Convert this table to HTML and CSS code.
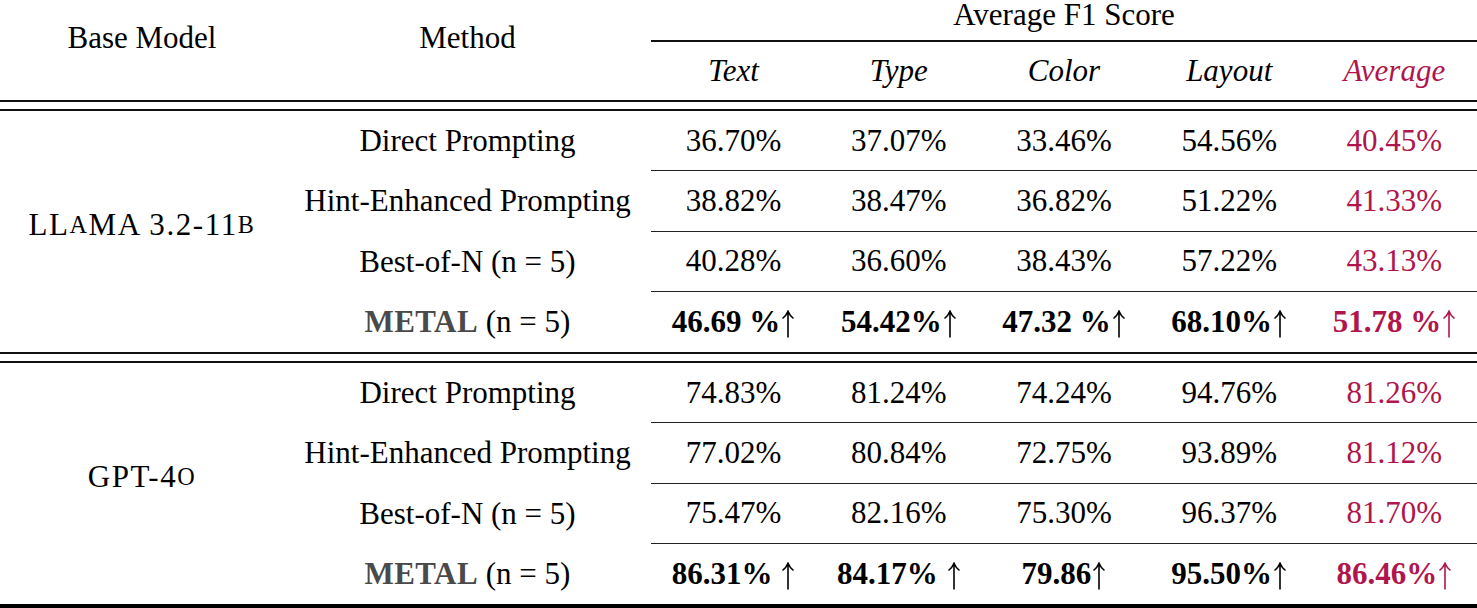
FILE: index.html
```html
<!DOCTYPE html>
<html>
<head>
<meta charset="utf-8">
<link rel="stylesheet" href="styles.css">
</head>
<body>
<div class="tbl">
  <div class="head">
    <div class="h-base">Base Model</div>
    <div class="h-method">Method</div>
    <div class="h-group">Average F1 Score</div>
    <div class="h-sub">Text</div>
    <div class="h-sub">Type</div>
    <div class="h-sub">Color</div>
    <div class="h-sub">Layout</div>
    <div class="h-sub hl">Average</div>
  </div>

  <div class="block">
    <div class="model">LL<span class="sc">a</span>MA 3.2-11<span class="sc">b</span></div>

    <div class="method">Direct Prompting</div>
    <div class="num rule">36.70%</div>
    <div class="num rule">37.07%</div>
    <div class="num rule">33.46%</div>
    <div class="num rule">54.56%</div>
    <div class="num rule hl">40.45%</div>

    <div class="method">Hint-Enhanced Prompting</div>
    <div class="num rule">38.82%</div>
    <div class="num rule">38.47%</div>
    <div class="num rule">36.82%</div>
    <div class="num rule">51.22%</div>
    <div class="num rule hl">41.33%</div>

    <div class="method">Best-of-N (n = 5)</div>
    <div class="num rule">40.28%</div>
    <div class="num rule">36.60%</div>
    <div class="num rule">38.43%</div>
    <div class="num rule">57.22%</div>
    <div class="num rule hl">43.13%</div>

    <div class="method"><b class="metal">METAL</b>&nbsp;(n = 5)</div>
    <div class="num best">46.69 %<svg class="up" viewBox="0 0 14 28"><path d="M7 27.5V1.5M1.5 8.5C4 6.5 5.8 4.2 7 1.2C8.2 4.2 10 6.5 12.5 8.5"/></svg></div>
    <div class="num best">54.42%<svg class="up" viewBox="0 0 14 28"><path d="M7 27.5V1.5M1.5 8.5C4 6.5 5.8 4.2 7 1.2C8.2 4.2 10 6.5 12.5 8.5"/></svg></div>
    <div class="num best">47.32 %<svg class="up" viewBox="0 0 14 28"><path d="M7 27.5V1.5M1.5 8.5C4 6.5 5.8 4.2 7 1.2C8.2 4.2 10 6.5 12.5 8.5"/></svg></div>
    <div class="num best">68.10%<svg class="up" viewBox="0 0 14 28"><path d="M7 27.5V1.5M1.5 8.5C4 6.5 5.8 4.2 7 1.2C8.2 4.2 10 6.5 12.5 8.5"/></svg></div>
    <div class="num best hl">51.78 %<svg class="up" viewBox="0 0 14 28"><path d="M7 27.5V1.5M1.5 8.5C4 6.5 5.8 4.2 7 1.2C8.2 4.2 10 6.5 12.5 8.5"/></svg></div>
  </div>

  <div class="block last">
    <div class="model">GPT-4<span class="sc">o</span></div>

    <div class="method">Direct Prompting</div>
    <div class="num rule">74.83%</div>
    <div class="num rule">81.24%</div>
    <div class="num rule">74.24%</div>
    <div class="num rule">94.76%</div>
    <div class="num rule hl">81.26%</div>

    <div class="method">Hint-Enhanced Prompting</div>
    <div class="num rule">77.02%</div>
    <div class="num rule">80.84%</div>
    <div class="num rule">72.75%</div>
    <div class="num rule">93.89%</div>
    <div class="num rule hl">81.12%</div>

    <div class="method">Best-of-N (n = 5)</div>
    <div class="num rule">75.47%</div>
    <div class="num rule">82.16%</div>
    <div class="num rule">75.30%</div>
    <div class="num rule">96.37%</div>
    <div class="num rule hl">81.70%</div>

    <div class="method"><b class="metal">METAL</b>&nbsp;(n = 5)</div>
    <div class="num best">86.31% <svg class="up" viewBox="0 0 14 28"><path d="M7 27.5V1.5M1.5 8.5C4 6.5 5.8 4.2 7 1.2C8.2 4.2 10 6.5 12.5 8.5"/></svg></div>
    <div class="num best">84.17% <svg class="up" viewBox="0 0 14 28"><path d="M7 27.5V1.5M1.5 8.5C4 6.5 5.8 4.2 7 1.2C8.2 4.2 10 6.5 12.5 8.5"/></svg></div>
    <div class="num best">79.86<svg class="up" viewBox="0 0 14 28"><path d="M7 27.5V1.5M1.5 8.5C4 6.5 5.8 4.2 7 1.2C8.2 4.2 10 6.5 12.5 8.5"/></svg></div>
    <div class="num best">95.50%<svg class="up" viewBox="0 0 14 28"><path d="M7 27.5V1.5M1.5 8.5C4 6.5 5.8 4.2 7 1.2C8.2 4.2 10 6.5 12.5 8.5"/></svg></div>
    <div class="num best hl">86.46%<svg class="up" viewBox="0 0 14 28"><path d="M7 27.5V1.5M1.5 8.5C4 6.5 5.8 4.2 7 1.2C8.2 4.2 10 6.5 12.5 8.5"/></svg></div>
  </div>
</div>
</body>
</html>
```

FILE: styles.css
```css
html, body {
  margin: 0;
  padding: 0;
  background: #fff;
}

body {
  font-family: "Liberation Serif", "Times New Roman", serif;
  font-size: 31px;
  color: #000;
  overflow: hidden;
}

.tbl {
  width: 1477px;
}

.head,
.block {
  display: grid;
  grid-template-columns: 284px 367px repeat(5, 1fr);
}

.head {
  grid-template-rows: 42px 58px;
  border-bottom: 2px solid #111;
}

.h-base,
.h-method {
  grid-row: 1 / 3;
  text-align: center;
  line-height: 36px;
  padding-top: 20px;
}

.h-base { grid-column: 1; }
.h-method { grid-column: 2; }

.h-group {
  grid-column: 3 / 8;
  grid-row: 1;
  text-align: center;
  line-height: 30px;
  border-bottom: 2px solid #111;
  box-sizing: border-box;
}

.h-sub {
  grid-row: 2;
  display: flex;
  align-items: center;
  justify-content: center;
  font-style: italic;
}

.hl {
  color: #b0164c;
}

.block {
  grid-template-rows: repeat(4, 60.25px);
  margin-top: 7px;
  border-top: 2px solid #111;
  border-bottom: 2px solid #111;
}

.block.last {
  border-bottom: 4px solid #000;
}

.model {
  grid-column: 1;
  grid-row: 1 / 5;
  display: flex;
  align-items: center;
  justify-content: center;
  padding-bottom: 14px;
  padding-left: 0;
  box-sizing: border-box;
  letter-spacing: 1.6px;
  white-space: nowrap;
}

.sc {
  text-transform: uppercase;
  font-size: 0.78em;
}

.method {
  grid-column: 2;
  display: flex;
  align-items: center;
  justify-content: center;
  white-space: nowrap;
}

.metal {
  color: #4a4a4a;
  font-weight: bold;
  letter-spacing: 0.4px;
}

.num {
  display: flex;
  align-items: center;
  justify-content: center;
  box-sizing: border-box;
  white-space: pre;
}

.num.rule {
  border-bottom: 1.5px solid #222;
}

.best {
  font-weight: bold;
}

.up {
  width: 14px;
  height: 28px;
  margin-left: 1px;
  margin-top: 4px;
  fill: none;
  stroke: currentColor;
  stroke-width: 1.6;
  flex: none;
}
```
